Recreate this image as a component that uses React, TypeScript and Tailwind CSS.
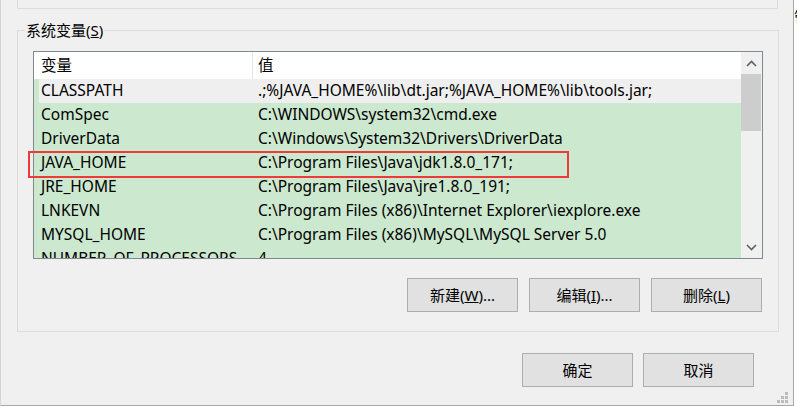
const rows = [
  { name: "CLASSPATH", value: ".;%JAVA_HOME%\\lib\\dt.jar;%JAVA_HOME%\\lib\\tools.jar;", selected: true },
  { name: "ComSpec", value: "C:\\WINDOWS\\system32\\cmd.exe" },
  { name: "DriverData", value: "C:\\Windows\\System32\\Drivers\\DriverData" },
  { name: "JAVA_HOME", value: "C:\\Program Files\\Java\\jdk1.8.0_171;" },
  { name: "JRE_HOME", value: "C:\\Program Files\\Java\\jre1.8.0_191;" },
  { name: "LNKEVN", value: "C:\\Program Files (x86)\\Internet Explorer\\iexplore.exe" },
  { name: "MYSQL_HOME", value: "C:\\Program Files (x86)\\MySQL\\MySQL Server 5.0" },
  { name: "NUMBER_OF_PROCESSORS", value: "4" },
];

function WinButton({ children }: { children: React.ReactNode }) {
  return (
    <button type="button" className="flex h-[34px] w-[111px] items-center justify-center border border-[#adadad] bg-[#e1e1e1] text-[15px] text-black">
      {children}
    </button>
  );
}

function Chevron({ down }: { down?: boolean }) {
  return (
    <svg width="11" height="7" viewBox="0 0 11 7" className={down ? "rotate-180" : ""}>
      <path d="M1 6 L5.5 1.5 L10 6" fill="none" stroke="#606060" strokeWidth="1.6" />
    </svg>
  );
}

export default function App() {
  return (
    <div className="relative flex h-[406px] w-[797px] overflow-hidden bg-[#f0f0f0] font-['Noto_Sans','Noto_Sans_CJK_SC',sans-serif] text-[15px] text-black">
      <div className="w-px bg-[#d4d4d4]" />

      <div className="flex w-[792px] flex-col border-b border-[#a8a8a8]">
        {/* bottom of the user variables group above */}
        <div className="ml-[16px] h-[9px] w-[761px] border-x border-b border-[#dcdcdc]" />

        <fieldset className="ml-[16px] mt-[11px] w-[761px] border border-[#dcdcdc] px-[15px] pb-[19px]">
          <legend className="ml-[-8px] px-px leading-[20px]">
            系统变量(<span className="underline">S</span>)
          </legend>

          <div className="mt-[11px] flex h-[208px] w-[730px] border border-[#828790] text-[15.5px]">
            <div className="flex flex-1 flex-col overflow-hidden bg-[#cce8cf]">
              <div className="flex h-[27px] shrink-0 items-center bg-white">
                <div className="flex h-full w-[219px] items-center border-r border-[#e5e5e5] pl-[7px]">变量</div>
                <div className="pl-[5px]">值</div>
              </div>
              {rows.map((row) => (
                <div key={row.name} className="flex h-6 shrink-0 pl-[5px]">
                  <div className={`flex flex-1 items-center ${row.selected ? "bg-[#efefef]" : ""}`}>
                    <span className="w-[213px] whitespace-nowrap pl-[2px]">{row.name}</span>
                    <span className="whitespace-nowrap pl-[6px]">{row.value}</span>
                  </div>
                </div>
              ))}
            </div>
            <div className="flex w-[21px] flex-col bg-[#f0f0f0] pr-px">
              <div className="flex h-[22px] items-center justify-center">
                <Chevron />
              </div>
              <div className="h-[57px] bg-[#cdcdcd]" />
              <div className="flex-1" />
              <div className="flex h-[22px] items-center justify-center">
                <Chevron down />
              </div>
            </div>
          </div>

          <div className="mt-[19px] flex justify-end gap-[11px] pr-px">
            <WinButton>
              新建(<span className="underline">W</span>)...
            </WinButton>
            <WinButton>
              编辑(<span className="underline">I</span>)...
            </WinButton>
            <WinButton>
              删除(<span className="underline">L</span>)
            </WinButton>
          </div>
        </fieldset>

        <div className="mt-[21px] flex justify-end gap-[10px] pr-[39px]">
          <WinButton>确定</WinButton>
          <WinButton>取消</WinButton>
        </div>

        <div className="mt-auto flex justify-end pb-[1px] pr-[4px]">
          <svg width="12" height="12" viewBox="0 0 12 12">
            <rect x="8" y="0" width="3" height="3" fill="#bcbcbc" />
            <rect x="4" y="4" width="3" height="3" fill="#bcbcbc" />
            <rect x="8" y="4" width="3" height="3" fill="#bcbcbc" />
            <rect x="0" y="8" width="3" height="3" fill="#bcbcbc" />
            <rect x="4" y="8" width="3" height="3" fill="#bcbcbc" />
            <rect x="8" y="8" width="3" height="3" fill="#bcbcbc" />
          </svg>
        </div>
      </div>

      <div className="w-px bg-[#a8a8a8]" />
      <div className="flex-1 overflow-hidden bg-white">
        <span className="mt-[9px] block whitespace-nowrap leading-[16px]">管</span>
      </div>

      {/* red highlight around JAVA_HOME */}
      <div className="absolute left-[28px] top-[151px] h-[27px] w-[541px] border-2 border-[#f03a3a]" />
    </div>
  );
}
